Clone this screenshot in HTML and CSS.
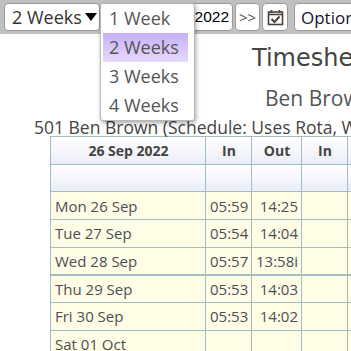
FILE: index.html
```html
<!DOCTYPE html>
<html>
<head>
<meta charset="utf-8">
<link rel="stylesheet" href="styles.css">
</head>
<body>
<div class="toolbar">
  <div class="select">2 Weeks<span class="arrow"></span></div>
  <div class="field date">26/09/2022</div>
  <div class="field btn next">&gt;&gt;</div>
  <div class="field btn cal">
    <svg width="17" height="17" viewBox="0 0 17 17">
      <rect x="1.5" y="3" width="14" height="12.5" fill="none" stroke="#4a4238" stroke-width="1.6"/>
      <line x1="1.5" y1="5.5" x2="15.5" y2="5.5" stroke="#4a4238" stroke-width="1.6"/>
      <line x1="4.5" y1="1" x2="4.5" y2="4" stroke="#4a4238" stroke-width="1.6"/>
      <line x1="12.5" y1="1" x2="12.5" y2="4" stroke="#4a4238" stroke-width="1.6"/>
      <polyline points="4.5,10 7.5,13 12.5,7.5" fill="none" stroke="#4a4238" stroke-width="2"/>
    </svg>
  </div>
  <div class="field options">Options</div>
</div>
<ul class="menu">
  <li>1 Week</li>
  <li class="active">2 Weeks</li>
  <li>3 Weeks</li>
  <li>4 Weeks</li>
</ul>
<h1 class="title">Timesheet</h1>
<h2 class="name">Ben Brown</h2>
<p class="sub">501 Ben Brown (Schedule: Uses Rota, Week 1)</p>
<table class="sheet">
  <thead>
    <tr class="hrow">
      <th class="day">26 Sep 2022</th><th class="t">In</th><th class="t out">Out</th><th class="t">In</th><th class="t out">Out</th>
    </tr>
    <tr class="hrow">
      <th></th><th></th><th></th><th></th><th></th>
    </tr>
  </thead>
  <tbody>
    <tr><td class="day">Mon 26 Sep</td><td class="t">05:59</td><td class="t">14:25</td><td></td><td></td></tr>
    <tr><td class="day">Tue 27 Sep</td><td class="t">05:54</td><td class="t">14:04</td><td></td><td></td></tr>
    <tr><td class="day">Wed 28 Sep</td><td class="t">05:57</td><td class="t">13:58i</td><td></td><td></td></tr>
    <tr class="wk"><td class="day">Thu 29 Sep</td><td class="t">05:53</td><td class="t">14:03</td><td></td><td></td></tr>
    <tr><td class="day">Fri 30 Sep</td><td class="t">05:53</td><td class="t">14:02</td><td></td><td></td></tr>
    <tr><td class="day">Sat 01 Oct</td><td class="t"></td><td class="t"></td><td></td><td></td></tr>
  </tbody>
</table>
</body>
</html>
```
FILE: styles.css
```css
html, body {
  margin: 0;
  padding: 0;
  overflow: hidden;
  width: 351px;
  height: 351px;
  background: #fff;
  font-family: "Open Sans", "Liberation Sans", sans-serif;
}
.toolbar {
  display: flex;
  align-items: stretch;
  gap: 2px;
  height: 28px;
  padding: 3px 0 3px 4px;
  background: #c0c0c0;
  white-space: nowrap;
}
.select, .field {
  box-sizing: border-box;
  background: #fff;
  border: 1px solid #9a9a9a;
  border-radius: 4px;
  display: flex;
  align-items: center;
  flex-shrink: 0;
}
.select {
  width: 96px;
  padding-left: 7px;
  font-size: 18px;
  color: #333;
  position: relative;
}
.arrow {
  margin-left: 3px;
  width: 0;
  height: 0;
  border-left: 6px solid transparent;
  border-right: 6px solid transparent;
  border-top: 8px solid #000;
}
.date {
  width: 131px;
  justify-content: flex-end;
  padding-right: 3px;
  font-family: "Liberation Sans", sans-serif;
  font-size: 15.5px;
  color: #000;
}
.btn {
  justify-content: center;
}
.next {
  width: 25px;
  font-size: 15px;
  color: #555;
}
.cal {
  width: 26px;
}
.options {
  margin-left: 4px;
  padding-left: 6px;
  width: 80px;
  font-size: 17px;
  color: #151530;
}
.menu {
  position: absolute;
  left: 100px;
  top: 3px;
  width: 95px;
  margin: 0;
  padding: 0;
  list-style: none;
  background: #fff;
  border: 1px solid #b8b8b8;
  border-radius: 3px;
  box-shadow: 1px 2px 4px rgba(0,0,0,0.35);
  box-sizing: border-box;
  height: 118px;
}
.menu li {
  height: 29px;
  line-height: 29px;
  margin: 0 6px 0 2px;
  padding-left: 6px;
  font-size: 18px;
  color: #555;
}
.menu li.active {
  background: linear-gradient(#c6b0f8, #e6dafc);
}
.title {
  margin: 9px 0 0 252px;
  font-family: "DejaVu Sans", sans-serif;
  font-weight: normal;
  font-size: 24px;
  line-height: 30px;
  color: #444;
  white-space: nowrap;
}
.name {
  margin: 11px 0 0 265px;
  font-weight: normal;
  font-size: 21px;
  line-height: 28px;
  color: #555;
  white-space: nowrap;
}
.sub {
  margin: 5px 0 0 34px;
  font-size: 17.5px;
  line-height: 20px;
  color: #444;
  white-space: nowrap;
}
.sheet {
  margin: -1px 0 0 50px;
  border-collapse: collapse;
  table-layout: fixed;
  width: 400px;
  font-size: 15px;
  color: #4d4f58;
}
.sheet th, .sheet td {
  border: 1px solid #9fbfc4;
  padding: 0 3px 0 4px;
  height: 27.7px;
  box-sizing: border-box;
  white-space: nowrap;
}
.sheet th {
  font-size: 14px;
  font-weight: bold;
  color: #444;
  text-align: center;
}
.hrow {
  background: linear-gradient(#ffffff, #ececf8);
}
.sheet th.day, .sheet td.day { width: 155px; }
.sheet .t { width: 46px; }
.sheet th:nth-child(3), .sheet td:nth-child(3) { width: 50px; }
.sheet th:nth-child(5), .sheet td:nth-child(5) { width: 103px; }
.sheet tbody tr {
  background: #fffde6;
}
.sheet td.t {
  text-align: right;
}
.sheet td.day {
  text-align: left;
}
.sheet tr.wk td {
  border-top: 2px solid #9fbfc4;
}
```
